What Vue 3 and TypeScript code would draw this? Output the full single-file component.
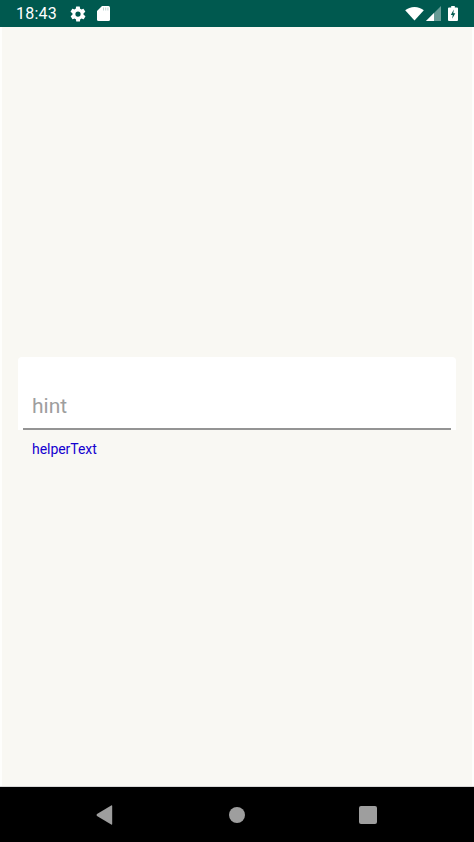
<script setup lang="ts">
const hint = 'hint'
const helper = 'helperText'
</script>

<template>
  <div class="screen">
    <header class="status">
      <div class="status-left">
        <span class="time">18:43</span>
        <svg class="gear" viewBox="0 0 24 24" width="18" height="18">
          <path fill="#fff" d="M19.4 13a7.5 7.5 0 0 0 0-2l2.1-1.6a.5.5 0 0 0 .1-.6l-2-3.5a.5.5 0 0 0-.6-.2l-2.5 1a7.3 7.3 0 0 0-1.700-1l-.4-2.600a.5.5 0 0 0-.5-.5h-4a.5.5 0 0 0-.5.4l-.4 2.700a7.600 7.600 0 0 0-1.700 1l-2.500-1a.5.5 0 0 0-.6.2l-2 3.500a.5.5 0 0 0 .1.6L4.600 11a7.900 7.900 0 0 0 0 2l-2.100 1.600a.5.5 0 0 0-.1.6l2 3.500a.5.5 0 0 0 .6.2l2.500-1c.5.4 1.100.7 1.700 1l.4 2.600c0 .3.2.5.5.5h4c.3 0 .5-.2.5-.4l.4-2.700a7.600 7.600 0 0 0 1.700-1l2.500 1a.5.5 0 0 0 .6-.2l2-3.500a.5.5 0 0 0-.1-.6zM12 15.500a3.500 3.500 0 1 1 0-7 3.500 3.500 0 0 1 0 7z" />
        </svg>
        <svg class="sd" viewBox="0 0 13 15" width="13" height="15">
          <path fill="#fff" d="M5 0H11.500A1.500 1.500 0 0 1 13 1.500V13.500A1.500 1.500 0 0 1 11.500 15H1.500A1.500 1.500 0 0 1 0 13.500V5Z" />
          <path fill="#00594f" fill-opacity=".25" d="M6 1.500H7V4.500H6ZM8.200 1.500H9.200V4.500H8.200ZM10.400 1.500H11.400V4.500H10.400Z" />
        </svg>
      </div>
      <div class="status-right">
        <svg viewBox="0 0 20 15" width="19" height="14">
          <path fill="#fff" d="M10 14.500 0 3.600C2.600 1.400 6.100 0 10 0s7.400 1.400 10 3.600Z" />
        </svg>
        <svg viewBox="0 0 15 15" width="15" height="15" class="signal">
          <path fill="#fff" fill-opacity=".4" d="M15 0V15H0Z" />
          <path fill="#fff" d="M8 7V15H0Z" />
        </svg>
        <svg viewBox="0 0 10 15" width="10" height="15" class="battery">
          <path fill="#fff" d="M3.200 0H6.800V1.500H9A1 1 0 0 1 10 2.500V14A1 1 0 0 1 9 15H1A1 1 0 0 1 0 14V2.500A1 1 0 0 1 1 1.500H3.200Z" />
          <path fill="#00594f" d="M5.800 3.500 2.800 9H4.700L4.200 12.800 7.300 7.200H5.300Z" />
        </svg>
      </div>
    </header>

    <main class="content">
      <section class="field">
        <div class="input-box">
          <div class="hint">{{ hint }}</div>
        </div>
        <div class="underline"></div>
      </section>
      <div class="helper">{{ helper }}</div>
    </main>

    <nav class="navbar">
      <svg viewBox="0 0 18 20" width="18" height="20">
        <path fill="#9e9e9e" d="M16.200 1.100V18.900Q16.200 20 15.200 19.500L1 10.900Q0 10 1 9.100L15.200 .5Q16.200 0 16.200 1.100Z" />
      </svg>
      <span class="circle"></span>
      <span class="square"></span>
    </nav>
  </div>
</template>

<style scoped>
.screen {
  width: 474px;
  height: 842px;
  display: flex;
  flex-direction: column;
  background: #f9f8f3;
  font-family: Roboto, "Liberation Sans", sans-serif;
  overflow: hidden;
}
.status {
  flex: 0 0 27px;
  background: #00594f;
  display: flex;
  align-items: center;
  justify-content: space-between;
  padding: 0 16px 0 16px;
  color: #fff;
}
.status-left {
  display: flex;
  align-items: center;
}
.time {
  font-size: 16px;
  letter-spacing: 0.2px;
  margin-right: 12px;
}
.gear {
  margin-right: 10px;
}
.status-right {
  display: flex;
  align-items: center;
  gap: 2px;
}
.battery {
  margin-left: 5px;
}
.content {
  flex: 1;
  padding: 330px 16px 0;
  border-left: 2px solid #fefefc;
  border-right: 2px solid #fefefc;
}
.field {
  height: 73px;
  background: #fff;
  border-radius: 4px 4px 0 0;
  display: flex;
  flex-direction: column;
  padding: 0 5px;
}
.input-box {
  flex: 1;
  display: flex;
  align-items: flex-end;
  padding: 0 0 9px 9px;
}
.hint {
  font-size: 21px;
  line-height: 25px;
  color: #9e9e9e;
}
.underline {
  height: 2px;
  background: #949494;
}
.helper {
  margin: 11px 0 0 14px;
  font-size: 14px;
  letter-spacing: -0.05px;
  line-height: 17px;
  color: #1400d0;
}
.navbar {
  flex: 0 0 55px;
  background: #000;
  border-top: 1px solid #d8d8d8;
  display: flex;
  align-items: center;
  padding: 0 97px 0 96px;
  justify-content: space-between;
}
.circle {
  width: 16px;
  height: 16px;
  border-radius: 50%;
  background: #9e9e9e;
}
.square {
  width: 18px;
  height: 18px;
  border-radius: 2px;
  background: #9e9e9e;
}
</style>
